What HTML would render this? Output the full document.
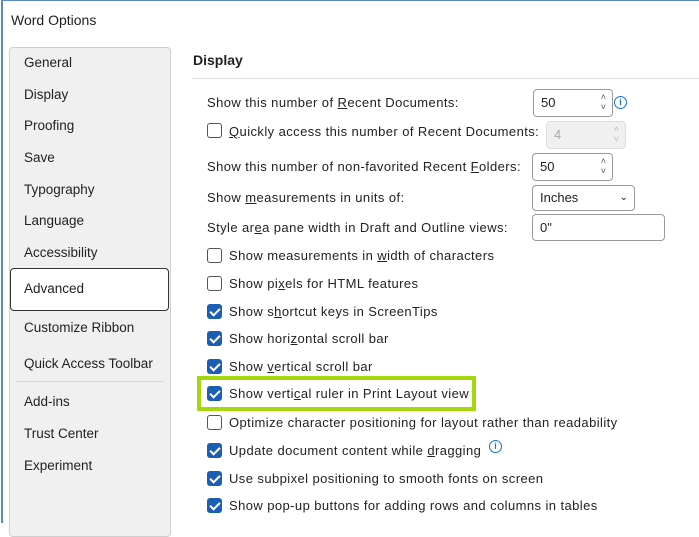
<!DOCTYPE html>
<html><head><meta charset="utf-8"><style>
*{box-sizing:border-box;margin:0;padding:0}
body{width:699px;height:523px;overflow:hidden;background:#fff;font-family:"Liberation Sans",sans-serif;font-size:13px;color:#222;position:relative}
.a{position:absolute;white-space:nowrap}
.win{position:absolute;left:1px;top:0;width:700px;height:523px;border-left:2px solid #5a8ac0;border-top:1px solid #5a8ac0}
.side{position:absolute;left:9px;top:47px;width:162px;height:490px;background:#f0f0f0;border:1px solid #cfcfcf;border-radius:4px}
.nav{position:absolute;left:24px;font-size:13.5px;color:#222}
.cb{position:absolute;left:207px;width:15px;height:15px;border:1px solid #555;border-radius:3px;background:#fff}
.cb.on{background:#1a5fb4;border-color:#1a5fb4}
.cb.on::after{content:"";position:absolute;left:4px;top:1px;width:4px;height:8px;border:solid #fff;border-width:0 2px 2px 0;transform:rotate(45deg)}
.t,.lt{position:absolute;letter-spacing:0.42px;white-space:nowrap}
.t{left:229px}
.lt{left:207px}
.box{position:absolute;border:1px solid #9a9a9a;border-radius:4px;background:#fff;padding:0 0 0 7px;line-height:26px}
.sp{position:absolute;right:6px;top:2px;font-size:9px;line-height:10px;color:#555}
u{text-decoration:underline}
.info{position:absolute;width:13px;height:13px;border:1.5px solid #1a6fd0;border-radius:50%;color:#1a6fd0;font-size:9px;line-height:10px;text-align:center;font-weight:bold}
</style></head><body>
<div class="win"></div>
<div class="a" style="left:11px;top:12px;font-size:14px">Word Options</div>
<div class="side"></div>
<div class="nav" style="top:55px">General</div>
<div class="nav" style="top:87px">Display</div>
<div class="nav" style="top:118px">Proofing</div>
<div class="nav" style="top:150px">Save</div>
<div class="nav" style="top:182px">Typography</div>
<div class="nav" style="top:213px">Language</div>
<div class="nav" style="top:245px">Accessibility</div>
<div class="a" style="left:10px;top:268px;width:159px;height:43px;background:#fff;border:1.5px solid #333;border-radius:4px"></div>
<div class="nav" style="top:281px">Advanced</div>
<div class="nav" style="top:320px">Customize Ribbon</div>
<div class="nav" style="top:356px">Quick Access Toolbar</div>
<div class="a" style="left:16px;top:381px;width:148px;height:1px;background:#d8d8d8"></div>
<div class="nav" style="top:394px">Add-ins</div>
<div class="nav" style="top:426px">Trust Center</div>
<div class="nav" style="top:458px">Experiment</div>

<div class="a" style="left:193px;top:52px;font-weight:bold;font-size:14px">Display</div>
<div class="a" style="left:192px;top:78px;width:507px;height:1px;background:#ddd"></div>

<div class="lt" style="top:95px">Show this number of <u>R</u>ecent Documents:</div>
<div class="box" style="left:533px;top:89px;width:80px;height:28px">50<div class="sp">˄<br>˅</div></div>
<div class="info" style="left:614px;top:96px">i</div>

<div class="cb" style="top:123px"></div>
<div class="t" style="top:124px"><u>Q</u>uickly access this number of Recent Documents:</div>
<div class="box" style="left:546px;top:121px;width:80px;height:28px;background:#f0f0f0;border-color:#ddd;color:#aaa">4<div class="sp" style="color:#bbb">˄<br>˅</div></div>

<div class="lt" style="top:159px">Show this number of non-favorited Recent <u>F</u>olders:</div>
<div class="box" style="left:532px;top:153px;width:81px;height:28px">50<div class="sp">˄<br>˅</div></div>

<div class="lt" style="top:190px">Show <u>m</u>easurements in units of:</div>
<div class="box" style="left:532px;top:185px;width:103px;height:26px;line-height:24px">Inches<div class="a" style="right:6px;top:0;font-size:10px">⌄</div></div>

<div class="lt" style="top:220px">Style ar<u>e</u>a pane width in Draft and Outline views:</div>
<div class="box" style="left:532px;top:214px;width:133px;height:27px">0"</div>

<div class="cb" style="top:248px"></div><div class="t" style="top:248px">Show measurements in <u>w</u>idth of characters</div>
<div class="cb" style="top:276px"></div><div class="t" style="top:276px">Show pi<u>x</u>els for HTML features</div>
<div class="cb on" style="top:304px"></div><div class="t" style="top:304px">Show s<u>h</u>ortcut keys in ScreenTips</div>
<div class="cb on" style="top:331px"></div><div class="t" style="top:331px">Show hori<u>z</u>ontal scroll bar</div>
<div class="cb on" style="top:359px"></div><div class="t" style="top:359px">Show <u>v</u>ertical scroll bar</div>
<div class="a" style="left:197px;top:376px;width:279px;height:35px;border:4px solid #a5d80c"></div>
<div class="cb on" style="top:386px"></div><div class="t" style="top:386px">Show verti<u>c</u>al ruler in Print Layout view</div>
<div class="cb" style="top:415px"></div><div class="t" style="top:415px">Optimize character positioning for layout rather than readability</div>
<div class="cb on" style="top:443px"></div><div class="t" style="top:443px">Update document content while <u>d</u>ragging</div>
<div class="info" style="left:489px;top:440px">i</div>
<div class="cb on" style="top:471px"></div><div class="t" style="top:471px">Use subpixel positioning to smooth fonts on screen</div>
<div class="cb on" style="top:498px"></div><div class="t" style="top:498px">Show pop-up buttons for adding rows and columns in tables</div>
</body></html>
